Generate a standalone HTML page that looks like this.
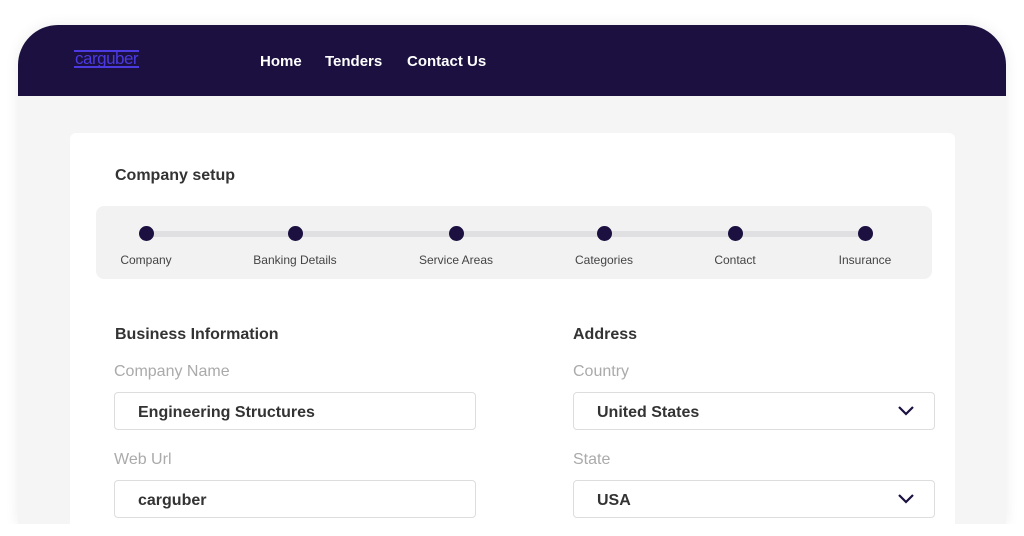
<!DOCTYPE html>
<html><head><style>
*{margin:0;padding:0;box-sizing:border-box}
body{width:1024px;height:536px;background:#fff;font-family:"Liberation Sans",sans-serif;position:relative;overflow:hidden}
.frame{position:absolute;left:18px;top:25px;width:988px;height:500px;background:#f5f5f6;border-radius:40px 40px 0 0;overflow:hidden;box-shadow:0 0 14px rgba(0,0,0,.08)}
.hdr{position:absolute;left:0;top:0;width:988px;height:71px;background:#1c1040}
.logo{position:absolute;left:56px;top:25px;color:#4a3ae0;font-size:17px;letter-spacing:-.5px;border-top:2px solid #4a3ae0;border-bottom:2px solid #4a3ae0;line-height:14px;padding:0 1px}
.nav{position:absolute;top:28px;color:#fff;font-weight:bold;font-size:15px}
.card{position:absolute;left:52px;top:108px;width:885px;height:420px;background:#fff;border-radius:6px}
.t{position:absolute;color:#333;font-weight:bold;font-size:16px}
.steps{position:absolute;left:96px;top:206px;width:836px;height:73px;background:#f2f2f3;border-radius:8px}
.line{position:absolute;left:50px;right:68px;top:25px;height:6px;background:#e0e0e2}
.dot{position:absolute;top:20px;width:15px;height:15px;border-radius:50%;background:#1c1040;margin-left:-7px}
.sl{position:absolute;top:47px;font-size:12px;color:#444;transform:translateX(-50%);white-space:nowrap}
.lab{position:absolute;color:#aaa;font-size:16px}
.in{position:absolute;height:38px;border:1.5px solid #ddd;border-radius:4px;font-weight:bold;color:#333;font-size:16px;padding-left:23px;line-height:40px}
.chev{position:absolute;right:20px;top:13px}
</style></head><body>
<div class="frame">
<div class="hdr">
<div class="logo">carguber</div>
<div class="nav" style="left:242px">Home</div>
<div class="nav" style="left:307px">Tenders</div>
<div class="nav" style="left:389px">Contact Us</div>
</div>
<div class="card"></div>
</div>
<div class="t" style="left:115px;top:167px;font-size:16px">Company setup</div>
<div class="steps">
<div class="line"></div>
<div class="dot" style="left:50px"></div><div class="sl" style="left:50px">Company</div>
<div class="dot" style="left:199px"></div><div class="sl" style="left:199px">Banking Details</div>
<div class="dot" style="left:360px"></div><div class="sl" style="left:360px">Service Areas</div>
<div class="dot" style="left:508px"></div><div class="sl" style="left:508px">Categories</div>
<div class="dot" style="left:639px"></div><div class="sl" style="left:639px">Contact</div>
<div class="dot" style="left:769px"></div><div class="sl" style="left:769px">Insurance</div>
</div>
<div class="t" style="left:115px;top:326px">Business Information</div>
<div class="t" style="left:573px;top:326px">Address</div>
<div class="lab" style="left:114px;top:363px">Company Name</div>
<div class="lab" style="left:573px;top:363px">Country</div>
<div class="in" style="left:114px;top:392px;width:362px">Engineering Structures</div>
<div class="in" style="left:573px;top:392px;width:362px">United States<svg class="chev" width="16" height="10" viewBox="0 0 16 10"><path d="M1 1l7 7 7-7" fill="none" stroke="#1c1040" stroke-width="2.2"/></svg></div>
<div class="lab" style="left:114px;top:451px">Web Url</div>
<div class="lab" style="left:573px;top:451px">State</div>
<div class="in" style="left:114px;top:480px;width:362px">carguber</div>
<div class="in" style="left:573px;top:480px;width:362px">USA<svg class="chev" width="16" height="10" viewBox="0 0 16 10"><path d="M1 1l7 7 7-7" fill="none" stroke="#1c1040" stroke-width="2.2"/></svg></div>
<div style="position:absolute;left:0;top:524px;width:1024px;height:12px;background:#fff"></div>
</body></html>
